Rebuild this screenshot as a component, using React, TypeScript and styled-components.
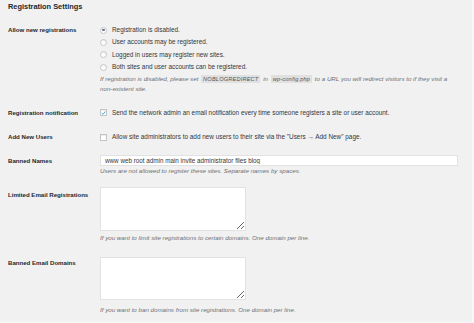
import styled, { createGlobalStyle } from 'styled-components';

const GlobalStyle = createGlobalStyle`
  html, body {
    margin: 0;
    padding: 0;
    background: #f8f8f8;
  }
  body {
    font-family: 'Liberation Sans', Arial, sans-serif;
    color: #23282d;
  }
`;

const Page = styled.div`
  width: 472px;
  height: 322px;
  background: #f1f1f1;
  overflow: hidden;
  box-sizing: border-box;
  padding: 2px 0 0 8px;
`;

const Title = styled.h2`
  margin: 0;
  font-size: 7.4px;
  line-height: 9px;
  font-weight: 700;
`;

const Form = styled.div`
  display: flex;
  flex-direction: column;
  margin-top: 13px;
`;

const Row = styled.div<{ $top?: number }>`
  display: grid;
  grid-template-columns: 92px 1fr;
  align-items: start;
  margin-top: ${(p) => p.$top ?? 0}px;
`;

const Label = styled.div<{ $pad?: number }>`
  font-size: 6.1px;
  font-weight: 700;
  line-height: 12px;
  padding-top: ${(p) => p.$pad ?? 0}px;
  white-space: nowrap;
`;

const Field = styled.div`
  display: flex;
  flex-direction: column;
  font-size: 6.4px;
  line-height: 12.3px;
  color: #32373c;
  white-space: nowrap;
`;

const Option = styled.label`
  display: flex;
  align-items: center;
  gap: 5px;
  height: 12.3px;
`;

const Radio = styled.span<{ $checked?: boolean }>`
  position: relative;
  width: 7px;
  height: 7px;
  box-sizing: border-box;
  border-radius: 50%;
  border: 1px solid #c3c6c9;
  background: #fff;
  box-shadow: inset 0 1px 1px rgba(0, 0, 0, 0.08);

  &::after {
    content: '';
    display: ${(p) => (p.$checked ? 'block' : 'none')};
    position: absolute;
    left: 50%;
    top: 50%;
    width: 2.6px;
    height: 2.6px;
    margin: -1.3px 0 0 -1.3px;
    border-radius: 50%;
    background: #6b7580;
  }
`;

const Check = styled.span`
  display: flex;
  align-items: center;
  justify-content: center;
  width: 7px;
  height: 7px;
  box-sizing: border-box;
  border: 1px solid #c3c6c9;
  background: #fff;
  box-shadow: inset 0 1px 1px rgba(0, 0, 0, 0.08);
`;

const Desc = styled.p<{ $top?: number }>`
  margin: ${(p) => p.$top ?? 0}px 0 0;
  font-size: 6.2px;
  line-height: 10.5px;
  font-style: italic;
  color: #6c7076;
  white-space: nowrap;
`;

const Code = styled.code`
  font-family: 'Liberation Sans', Arial, sans-serif;
  font-size: 5.6px;
  letter-spacing: 0.2px;
  padding: 1px 2px;
  margin: 0 1px;
  background: rgba(0, 0, 0, 0.07);
  color: #555;
`;

const TextInput = styled.input`
  width: 358px;
  height: 11px;
  box-sizing: border-box;
  margin: 0;
  padding: 0 4px;
  border: 1px solid #e2e2e2;
  background: #fff;
  font-family: 'Liberation Sans', Arial, sans-serif;
  font-size: 6.3px;
  color: #32373c;
  outline: none;
`;

const Area = styled.textarea<{ $h: number }>`
  display: block;
  width: 146px;
  height: ${(p) => p.$h}px;
  box-sizing: border-box;
  margin: 0;
  padding: 0;
  border: 1px solid #e2e2e2;
  background: #fff;
  resize: vertical;
  outline: none;
`;

const CheckMark = () => (
  <svg width="6" height="6" viewBox="0 0 10 10">
    <path d="M1.5 5.2 L4 7.6 L8.6 2" fill="none" stroke="#1e8cbe" strokeWidth="1.6" />
  </svg>
);

const radios = [
  { text: 'Registration is disabled.', checked: true },
  { text: 'User accounts may be registered.' },
  { text: 'Logged in users may register new sites.' },
  { text: 'Both sites and user accounts can be registered.' },
];

export default function App() {
  return (
    <>
      <GlobalStyle />
      <Page>
        <Title>Registration Settings</Title>
        <Form>
          <Row>
            <Label>Allow new registrations</Label>
            <Field>
              {radios.map((r, i) => (
                <Option key={i}>
                  <Radio $checked={r.checked} />
                  {r.text}
                </Option>
              ))}
              <Desc $top={0.5}>
                If registration is disabled, please set <Code>NOBLOGREDIRECT</Code> in{' '}
                <Code>wp-config.php</Code> to a URL you will redirect visitors to if they visit a
                <br />
                non-existent site.
              </Desc>
            </Field>
          </Row>
          <Row $top={12}>
            <Label>Registration notification</Label>
            <Field>
              <Option>
                <Check>
                  <CheckMark />
                </Check>
                Send the network admin an email notification every time someone registers a site or
                user account.
              </Option>
            </Field>
          </Row>
          <Row $top={12}>
            <Label>Add New Users</Label>
            <Field>
              <Option>
                <Check />
                Allow site administrators to add new users to their site via the "Users → Add New"
                page.
              </Option>
            </Field>
          </Row>
          <Row $top={12}>
            <Label>Banned Names</Label>
            <Field>
              <TextInput readOnly value="www web root admin main invite administrator files blog" />
              <Desc>Users are not allowed to register these sites. Separate names by spaces.</Desc>
            </Field>
          </Row>
          <Row $top={10}>
            <Label $pad={2}>Limited Email Registrations</Label>
            <Field>
              <Area $h={44} readOnly />
              <Desc $top={2.5}>
                If you want to limit site registrations to certain domains. One domain per line.
              </Desc>
            </Field>
          </Row>
          <Row $top={13}>
            <Label $pad={0}>Banned Email Domains</Label>
            <Field>
              <Area $h={43} readOnly />
              <Desc $top={5}>If you want to ban domains from site registrations. One domain per line.</Desc>
            </Field>
          </Row>
        </Form>
      </Page>
    </>
  );
}
